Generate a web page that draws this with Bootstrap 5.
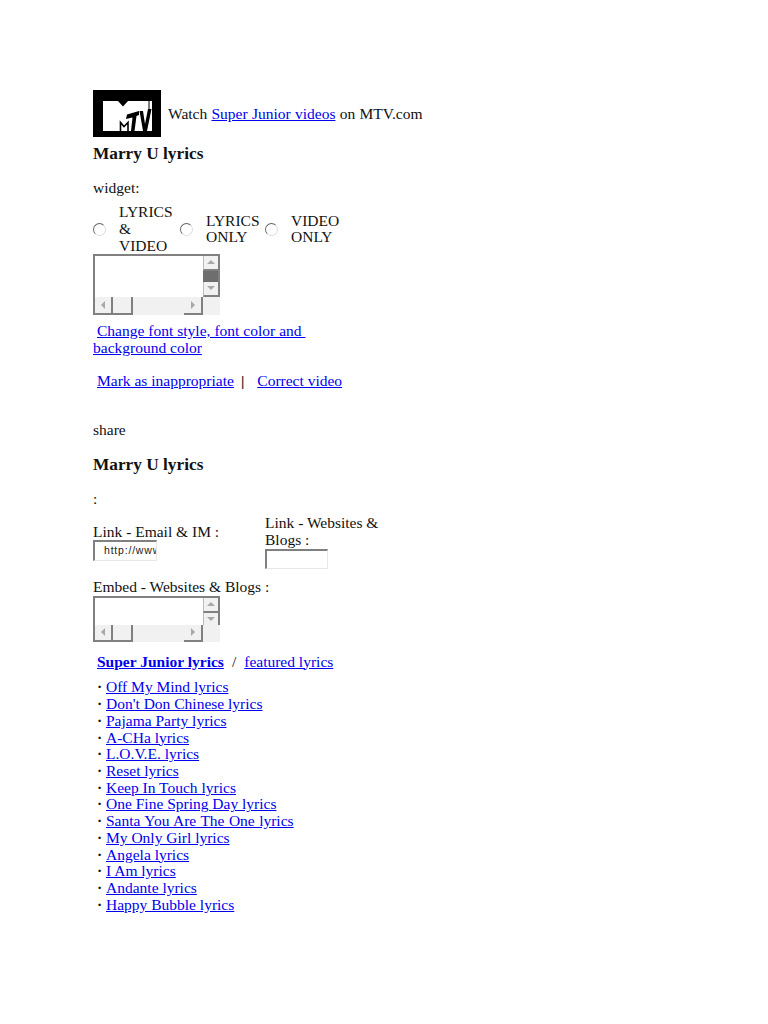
<!DOCTYPE html>
<html lang="en">
<head>
<meta charset="utf-8">
<title>Marry U lyrics</title>
<link href="https://cdn.jsdelivr.net/npm/bootstrap@5.3.0/dist/css/bootstrap.min.css" rel="stylesheet">
<style>
body{background:#fff;color:#111;font-family:"Liberation Serif",serif;font-size:15.5px;line-height:16.8px}
a{color:#00e}
.sheet{padding:90px 0 0 93px;width:768px;min-height:1024px}
.logo-box{width:68px;height:47px;background:#000;display:block}
.song-title{font-family:inherit;font-size:17.3px;font-weight:700;line-height:20px;margin:0}
.head-row{gap:7px}
.head-text{word-spacing:.4px;padding-top:2px}
.t1{margin-top:7px}
.t2{margin-top:16px}
.radio-row{margin-top:8px;width:270px;height:49px}
.radio-dot{width:13px;height:13px;border-radius:50%;border:1px solid #aaa;border-top-color:#666;border-left-color:#666;border-right-color:#ddd;border-bottom-color:#ddd;background:#fff;flex:none;margin:0 13px 0 0;appearance:none}
.radio-label{width:61px;flex:none;padding-right:12px}
.radio-label.w2{width:59px;padding-right:10px}
.radio-label.w3{width:50px;padding-right:0}
.scroll-box{display:grid;grid-template-columns:110px 17px;grid-template-rows:43px 18px;width:127px;height:61px}
.sb-view{background:#fff;border:2px solid #808080;border-right:0;border-bottom:0}
.sb-v{display:flex;flex-direction:column;border-top:2px solid #808080;border-right:2px solid #808080;background:#fff}
.sb-h{display:flex;background:#f1f1f1;border-left:2px solid #808080}
.sb-corner{background:#f1f1f1}
.sb-btn{display:flex;align-items:center;justify-content:center;background:#f1f1f1;flex:none}
.sb-v .sb-btn{height:15px;border-left:1px solid #bbb;border-bottom:2px solid #808080}
.sb-thumb{background:#6e6e6e;height:11px;flex:none}
.sb-v .grow{flex:1 1 auto}
.sb-h .sb-btn{width:18px;height:18px;border-right:2px solid #808080;border-bottom:2px solid #808080}
.sb-h .thumb-h{width:20px}
.sb-h .fill{flex:1 1 auto}
.sb-h .sb-btn.end{width:19px}
.tri{width:0;height:0;display:block;border:4px solid transparent}
.tri.up{border-top:0;border-bottom-color:#a8a8a8}
.tri.down{border-bottom:0;border-top-color:#a8a8a8}
.tri.left{border-left:0;border-right-color:#a8a8a8}
.tri.right{border-right:0;border-left-color:#a8a8a8}
.change-link{margin-top:8px}
.pad-link{margin-left:4px}
.wide-words{word-spacing:.55px}
.mid-words{word-spacing:.1px}
.mark-row{margin-top:17px}
.sep{margin:0 8px}
.sep.wider{margin:0 13px 0 7px;font-weight:700}
.share-txt{margin-top:32px}
.t3{margin-top:16px}
.colon{margin-top:16px}
.link-cols{margin-top:7px;height:55px}
.link-col1{width:172px;padding-top:9px}
.link-col2{width:125px}
.field-a,.field-b{display:block;background:#fff;border:1px solid #e8e8e8;border-top:2px solid #808080;border-left:2px solid #808080;padding:0;margin:0;outline:0}
.field-a{width:64px;height:21px;margin-top:-1px;font:10.5px "Liberation Sans",sans-serif;padding:0 0 2px 9px;color:#222;letter-spacing:.8px}
.field-b{width:63px;height:20px;margin-top:1px}
.embed-lbl{margin-top:9px}
.box-b{height:46px;grid-template-rows:29px 17px}
.box-b .sb-h .sb-btn{height:17px}
.crumbs{margin-top:12px}
.song-list{margin:9px 0 0;padding:0;list-style:none}
.song-list li{display:flex;height:16.72px;line-height:16.72px}
.bullet{width:13px;padding-left:4px;font-weight:700;flex:none}
</style>
</head>
<body>
<main class="sheet">
  <div class="d-flex align-items-center head-row">
    <svg class="logo-box" viewBox="0 0 68 47" role="img" aria-label="MTV">
      <rect width="68" height="47" fill="#000"/>
      <path fill="#fff" d="M10 11H25L30 16.5L35 11H59V41H10Z"/>
      <path fill="#000" d="M55.5 11H56.5V20H55.5Z"/>
      <path fill="none" stroke="#000" stroke-width="1.6" d="M27.5 41V32.5L31 36.5L35 32.5V41"/>
      <path fill="#000" d="M34 24.5L46 21V25L43.5 26L41.5 41H38L39.5 27.5L33 29Z"/>
      <path fill="#000" d="M46.5 21H50L52 34L55 19H58.5L54 41H50Z"/>
    </svg>
    <div class="head-text">Watch <a href="#">Super Junior videos</a> on MTV.com</div>
  </div>
  <h2 class="song-title t1">Marry U lyrics</h2>
  <div class="t2">widget:</div>
  <div class="radio-row d-flex align-items-center">
    <input class="radio-dot" type="radio" name="w" aria-label="Lyrics and video">
    <span class="radio-label">LYRICS &amp; VIDEO</span>
    <input class="radio-dot" type="radio" name="w" aria-label="Lyrics only">
    <span class="radio-label w2">LYRICS ONLY</span>
    <input class="radio-dot" type="radio" name="w" aria-label="Video only">
    <span class="radio-label w3">VIDEO ONLY</span>
  </div>
  <div class="scroll-box">
    <div class="sb-view"></div>
    <div class="sb-v">
      <div class="sb-btn"><i class="tri up"></i></div>
      <div class="sb-thumb"></div>
      <div class="grow"></div>
      <div class="sb-btn"><i class="tri down"></i></div>
    </div>
    <div class="sb-h">
      <div class="sb-btn"><i class="tri left"></i></div>
      <div class="sb-btn thumb-h"></div>
      <div class="fill"></div>
      <div class="sb-btn end"><i class="tri right"></i></div>
    </div>
    <div class="sb-corner"></div>
  </div>
  <div class="change-link"><a class="pad-link mid-words" href="#">Change font style, font color and&nbsp;</a><br><a href="#">background color</a></div>
  <div class="mark-row"><a class="pad-link" href="#">Mark as inappropriate</a><span class="sep wider">|</span><a href="#">Correct video</a></div>
  <div class="share-txt">share</div>
  <h2 class="song-title t3">Marry U lyrics</h2>
  <div class="colon">:</div>
  <div class="link-cols d-flex">
    <div class="link-col1">Link - Email &amp; IM :<input class="field-a" value="http://www.scribd.com" aria-label="Link email"></div>
    <div class="link-col2">Link - Websites &amp; Blogs :<input class="field-b" aria-label="Link websites"></div>
  </div>
  <div class="embed-lbl">Embed - Websites &amp; Blogs :</div>
  <div class="scroll-box box-b">
    <div class="sb-view"></div>
    <div class="sb-v">
      <div class="sb-btn"><i class="tri up"></i></div>
      <div class="sb-btn"><i class="tri down"></i></div>
    </div>
    <div class="sb-h">
      <div class="sb-btn"><i class="tri left"></i></div>
      <div class="sb-btn thumb-h"></div>
      <div class="fill"></div>
      <div class="sb-btn end"><i class="tri right"></i></div>
    </div>
    <div class="sb-corner"></div>
  </div>
  <div class="crumbs"><a class="pad-link fw-bold" href="#">Super Junior lyrics</a><span class="sep">/</span><a href="#">featured lyrics</a></div>
  <ul class="song-list">
    <li><span class="bullet">·</span><a href="#">Off My Mind lyrics</a></li>
    <li><span class="bullet">·</span><a href="#">Don't Don Chinese lyrics</a></li>
    <li><span class="bullet">·</span><a href="#">Pajama Party lyrics</a></li>
    <li><span class="bullet">·</span><a href="#">A-CHa lyrics</a></li>
    <li><span class="bullet">·</span><a href="#">L.O.V.E. lyrics</a></li>
    <li><span class="bullet">·</span><a href="#">Reset lyrics</a></li>
    <li><span class="bullet">·</span><a href="#">Keep In Touch lyrics</a></li>
    <li><span class="bullet">·</span><a href="#">One Fine Spring Day lyrics</a></li>
    <li><span class="bullet">·</span><a class="wide-words" href="#">Santa You Are The One lyrics</a></li>
    <li><span class="bullet">·</span><a href="#">My Only Girl lyrics</a></li>
    <li><span class="bullet">·</span><a href="#">Angela lyrics</a></li>
    <li><span class="bullet">·</span><a href="#">I Am lyrics</a></li>
    <li><span class="bullet">·</span><a href="#">Andante lyrics</a></li>
    <li><span class="bullet">·</span><a href="#">Happy Bubble lyrics</a></li>
  </ul>
</main>
<script src="https://cdn.jsdelivr.net/npm/bootstrap@5.3.0/dist/js/bootstrap.bundle.min.js"></script>
</body>
</html>
